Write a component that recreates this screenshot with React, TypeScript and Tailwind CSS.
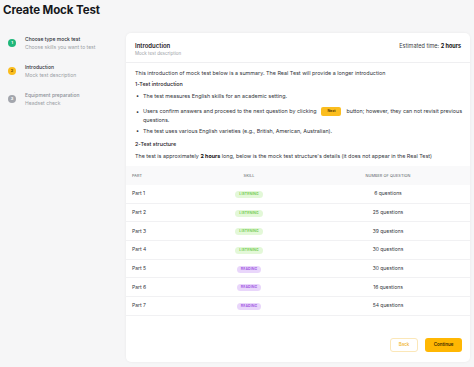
import React from "react";

type Step = { n: number; title: string; sub: string; state: "done" | "active" | "todo" };

const steps: Step[] = [
  { n: 1, title: "Choose type mock test", sub: "Choose skills you want to test", state: "done" },
  { n: 2, title: "Introduction", sub: "Mock test description", state: "active" },
  { n: 3, title: "Equipment preparation", sub: "Headset check", state: "todo" },
];

const parts = [
  { part: "Part 1", skill: "LISTENING", q: "6 questions" },
  { part: "Part 2", skill: "LISTENING", q: "25 questions" },
  { part: "Part 3", skill: "LISTENING", q: "39 questions" },
  { part: "Part 4", skill: "LISTENING", q: "30 questions" },
  { part: "Part 5", skill: "READING", q: "30 questions" },
  { part: "Part 6", skill: "READING", q: "16 questions" },
  { part: "Part 7", skill: "READING", q: "54 questions" },
];

const StepItem = ({ step }: { step: Step }) => {
  const circle =
    step.state === "done"
      ? "bg-[#1fb77a] text-white"
      : step.state === "active"
      ? "bg-[#fbbd1e] text-[#7a5200]"
      : "bg-[#a3a6ad] text-white";
  const titleColor = step.state === "todo" ? "text-[#8b8f96]" : "text-[#2b2f36]";
  return (
    <div className="flex items-center gap-[9px] h-[28px]">
      <div className={`w-[8px] h-[8px] rounded-full flex items-center justify-center text-[4px] font-bold ${circle}`}>
        {step.n}
      </div>
      <div className="leading-[8px]">
        <div className={`text-[5px] font-medium ${titleColor}`}>{step.title}</div>
        <div className="text-[5px] text-[#9a9ea5]">{step.sub}</div>
      </div>
    </div>
  );
};

const SkillBadge = ({ skill }: { skill: string }) =>
  skill === "LISTENING" ? (
    <span className="inline-block rounded-full bg-[#e3f8d8] text-[#6cc94a] text-[3.5px] font-semibold px-[4px] leading-[7px] tracking-wide">
      {skill}
    </span>
  ) : (
    <span className="inline-block rounded-full bg-[#e9d6fb] text-[#9b4fe0] text-[3.5px] font-semibold px-[4px] leading-[7px] tracking-wide">
      {skill}
    </span>
  );

export default function App() {
  return (
    <div
      className="w-[474px] h-[367px] bg-[#f6f6f7] overflow-hidden relative"
      style={{ fontFamily: "Inter, 'Noto Sans', sans-serif" }}
    >
      <h1 className="px-[3px] pt-[1px] text-[11.5px] font-bold text-[#16181c] leading-[18px] tracking-[-0.1px]">
        Create Mock Test
      </h1>

      <div className="flex mt-[14px]">
        {/* Steps */}
        <div className="w-[126px] pl-[8px] -mt-[4px] flex flex-col">
          {steps.map((s) => (
            <StepItem key={s.n} step={s} />
          ))}
        </div>

        {/* Card */}
        <div className="w-[344px] h-[329px] bg-white rounded-[5px] shadow-[0_0_3px_rgba(0,0,0,0.06)] flex flex-col">
          <div className="flex items-start justify-between px-[9px] pt-[9px] h-[30px] border-b border-[#efeff1]">
            <div className="leading-[8px]">
              <div className="text-[6px] font-semibold text-[#1f2227]">Introduction</div>
              <div className="text-[4.5px] text-[#9a9ea5]">Mock test description</div>
            </div>
            <div className="text-[5.5px] text-[#3a3d43] leading-[8px]">
              Estimated time: <span className="font-bold text-[#111]">2 hours</span>
            </div>
          </div>

          <div className="px-[9px] pt-[4px] text-[5.4px] text-[#33363c] leading-[8px]">
            <p className="h-[11px] flex items-center">
              This introduction of mock test below is a summary. The Real Test will provide a longer introduction
            </p>
            <p className="h-[11px] flex items-center font-medium text-[#1f2227]">1-Test introduction</p>
            <ul className="mt-[2px] pl-[1px]">
              <li className="flex items-start h-[15px] pt-[1px]">
                <span className="w-[7px] shrink-0">•</span>
                <span>The test measures English skills for an academic setting.</span>
              </li>
              <li className="flex items-start pt-[1px]">
                <span className="w-[7px] shrink-0 mt-[1px]">•</span>
                <span className="leading-[9px] whitespace-nowrap">
                  Users confirm answers and proceed to the next question by clicking
                  <span className="inline-block align-middle mx-[5px] w-[20px] h-[9px] rounded-[2px] bg-[#fbbd1e] text-[3.5px] font-bold text-[#5a3d00] leading-[9px] text-center">
                    Next
                  </span>
                  button; however, they can not revisit previous
                  <br />
                  questions.
                </span>
              </li>
              <li className="flex items-start h-[13px] pt-[2px]">
                <span className="w-[7px] shrink-0">•</span>
                <span>The test uses various English varieties (e.g., British, American, Australian).</span>
              </li>
            </ul>
            <p className="h-[12px] flex items-center font-medium text-[#1f2227]">2-Test structure</p>
            <p className="h-[12px] flex items-center">
              <span>
                The test is approximately <span className="font-bold text-[#111]">2 hours</span> long, below is the mock
                test structure's details (it does not appear in the Real Test)
              </span>
            </p>
          </div>

          {/* Table */}
          <div className="mt-[4px]">
            <div className="grid grid-cols-[66px_114px_1fr] h-[19px] items-center bg-[#f9f9fa] text-[3.8px] text-[#55595f] tracking-wide">
              <div className="pl-[6px]">PART</div>
              <div className="text-center">SKILL</div>
              <div className="text-center">NUMBER OF QUESTION</div>
            </div>
            {parts.map((p) => (
              <div
                key={p.part}
                className="grid grid-cols-[66px_114px_1fr] h-[18.7px] items-center border-b border-[#f1f1f3] text-[5px] text-[#33363c]"
              >
                <div className="pl-[6px]">{p.part}</div>
                <div className="text-center">
                  <SkillBadge skill={p.skill} />
                </div>
                <div className="text-center">{p.q}</div>
              </div>
            ))}
          </div>

          <div className="mt-auto flex justify-end gap-[7px] px-[8px] pb-[10px]">
            <button className="w-[28px] h-[14px] rounded-[3px] border border-[#fbe7b8] bg-white text-[4.5px] text-[#f0b429] font-medium">
              Back
            </button>
            <button className="w-[37px] h-[14px] rounded-[3px] bg-[#ffb703] text-[4.5px] text-[#3a2a00] font-semibold">
              Continue
            </button>
          </div>
        </div>
      </div>
    </div>
  );
}
